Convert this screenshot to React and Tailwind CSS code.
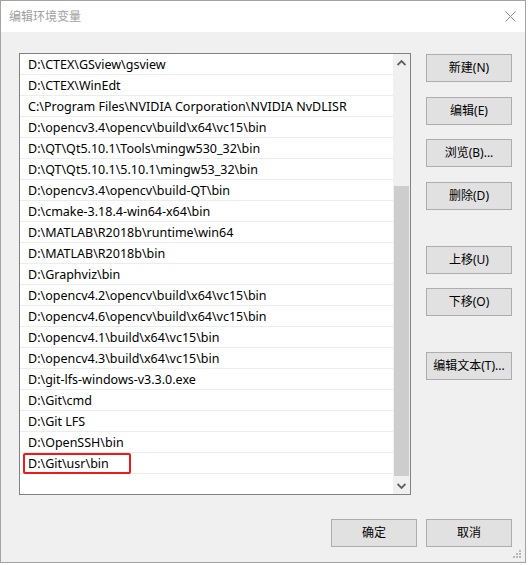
import React from "react";

const rows = [
  "D:\\CTEX\\GSview\\gsview",
  "D:\\CTEX\\WinEdt",
  "C:\\Program Files\\NVIDIA Corporation\\NVIDIA NvDLISR",
  "D:\\opencv3.4\\opencv\\build\\x64\\vc15\\bin",
  "D:\\QT\\Qt5.10.1\\Tools\\mingw530_32\\bin",
  "D:\\QT\\Qt5.10.1\\5.10.1\\mingw53_32\\bin",
  "D:\\opencv3.4\\opencv\\build-QT\\bin",
  "D:\\cmake-3.18.4-win64-x64\\bin",
  "D:\\MATLAB\\R2018b\\runtime\\win64",
  "D:\\MATLAB\\R2018b\\bin",
  "D:\\Graphviz\\bin",
  "D:\\opencv4.2\\opencv\\build\\x64\\vc15\\bin",
  "D:\\opencv4.6\\opencv\\build\\x64\\vc15\\bin",
  "D:\\opencv4.1\\build\\x64\\vc15\\bin",
  "D:\\opencv4.3\\build\\x64\\vc15\\bin",
  "D:\\git-lfs-windows-v3.3.0.exe",
  "D:\\Git\\cmd",
  "D:\\Git LFS",
  "D:\\OpenSSH\\bin",
  "D:\\Git\\usr\\bin",
];

const font = { fontFamily: '"Noto Sans", "Noto Sans CJK SC", sans-serif' };

function Btn({ children, className = "" }) {
  return (
    <button
      className={
        "w-[86px] h-[28px] border border-[#adadad] bg-[#e1e1e1] text-[12px] text-black flex items-center justify-center leading-none " +
        className
      }
    >
      {children}
    </button>
  );
}

export default function App() {
  return (
    <div className="w-[528px] h-[565px] bg-white" style={font}>
      <div className="w-[526px] h-[563px] border border-[#a3a3a3] flex flex-col">
        <div className="h-[31px] bg-white flex items-center justify-between pl-[8px] pr-[9px] shrink-0">
          <span className="text-[12px] text-[#a0a0a0]">编辑环境变量</span>
          <svg width="11" height="11" viewBox="0 0 11 11">
            <path d="M0.5 0.5 L10.5 10.5 M10.5 0.5 L0.5 10.5" stroke="#8a8a8a" strokeWidth="1" />
          </svg>
        </div>
        <div className="flex-1 bg-[#f0f0f0] flex flex-col pl-[18px] pt-[21px]">
          <div className="flex">
            <div className="w-[392px] h-[442px] border border-[#828282] bg-white flex">
              <div className="flex-1 flex flex-col">
                {rows.map((r, i) => (
                  <div
                    key={i}
                    className="h-[21px] border-b border-[#ececec] flex items-center pl-[8px] text-[12.5px] text-black whitespace-nowrap relative"
                  >
                    <span className="pt-[3px]">{r}</span>
                    {i === rows.length - 1 && (
                      <div className="absolute left-[3px] top-[0px] w-[108px] h-[21px] border-2 border-[#f01818] rounded-[2px]" />
                    )}
                  </div>
                ))}
              </div>
              <div className="w-[17px] bg-[#f0f0f0] flex flex-col items-center">
                <div className="h-[17px] w-full flex items-center justify-center">
                  <svg width="9" height="6" viewBox="0 0 9 6">
                    <path d="M0.5 5 L4.5 1 L8.5 5" fill="none" stroke="#606060" strokeWidth="1.8" />
                  </svg>
                </div>
                <div className="flex-1 w-full pt-[115px] pb-[1px] px-[1px]">
                  <div className="w-full h-full bg-[#cdcdcd]" />
                </div>
                <div className="h-[17px] w-full flex items-center justify-center">
                  <svg width="9" height="6" viewBox="0 0 9 6">
                    <path d="M0.5 1 L4.5 5 L8.5 1" fill="none" stroke="#606060" strokeWidth="1.8" />
                  </svg>
                </div>
              </div>
            </div>
            <div className="flex flex-col ml-[15px] pt-[1px]">
              <Btn>新建(N)</Btn>
              <Btn className="mt-[15px]">编辑(E)</Btn>
              <Btn className="mt-[14px]">浏览(B)...</Btn>
              <Btn className="mt-[15px]">删除(D)</Btn>
              <Btn className="mt-[36px]">上移(U)</Btn>
              <Btn className="mt-[14px]">下移(O)</Btn>
              <Btn className="mt-[36px]">编辑文本(T)...</Btn>
            </div>
          </div>
          <div className="flex justify-end pr-[13px] mt-[24px] gap-[9px]">
            <Btn>确定</Btn>
            <Btn>取消</Btn>
          </div>
          <div className="flex-1 flex justify-end items-end pr-[3px] pb-[3px]">
            <svg width="9" height="9" viewBox="0 0 9 9">
              <rect x="6" y="0" width="2" height="2" fill="#b8b8b8" />
              <rect x="3" y="3" width="2" height="2" fill="#b8b8b8" />
              <rect x="6" y="3" width="2" height="2" fill="#b8b8b8" />
              <rect x="0" y="6" width="2" height="2" fill="#b8b8b8" />
              <rect x="3" y="6" width="2" height="2" fill="#b8b8b8" />
              <rect x="6" y="6" width="2" height="2" fill="#b8b8b8" />
            </svg>
          </div>
        </div>
      </div>
    </div>
  );
}
